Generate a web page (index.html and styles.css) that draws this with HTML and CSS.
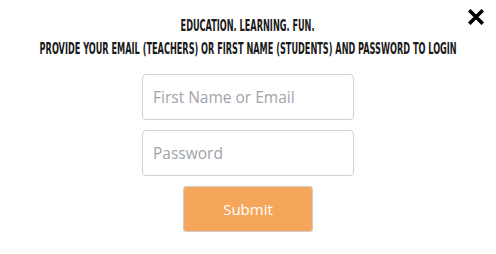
FILE: index.html
```html
<!DOCTYPE html>
<html>
<head>
<meta charset="utf-8">
<link rel="stylesheet" href="styles.css">
</head>
<body>
<div class="modal">
  <button class="close" aria-label="Close">
    <svg width="16" height="16" viewBox="0 0 16 16"><path d="M2.5 2.5 L13.5 13.5 M13.5 2.5 L2.5 13.5" stroke="#000" stroke-width="3.6" stroke-linecap="square"/></svg>
  </button>
  <div class="heading">
    <p class="line"><span class="squeeze">Education. Learning. Fun.</span></p>
    <p class="line"><span class="squeeze">Provide your email (teachers) or first name (students) and password to login</span></p>
  </div>
  <form class="form">
    <input class="field" type="text" placeholder="First Name or Email">
    <input class="field" type="password" placeholder="Password">
    <button class="submit" type="button">Submit</button>
  </form>
</div>
</body>
</html>
```
FILE: styles.css
```css
html, body {
  margin: 0;
  padding: 0;
  background: #fff;
}
.modal {
  position: relative;
  width: 496px;
  height: 254px;
  display: flex;
  flex-direction: column;
  align-items: center;
  padding-top: 18px;
  box-sizing: border-box;
  overflow: hidden;
}
.close {
  position: absolute;
  top: 9px;
  left: 468px;
  padding: 0;
  border: 0;
  background: none;
  width: 16px;
  height: 16px;
}
.close svg { display: block; }
.heading {
  display: flex;
  flex-direction: column;
  align-items: center;
  gap: 6px;
  width: 496px;
}
.line {
  margin: 0;
  width: 496px;
  height: 17px;
  display: flex;
  justify-content: center;
  white-space: nowrap;
  overflow: hidden;
}
.squeeze {
  flex: none;
  display: inline-block;
  font-family: "DejaVu Sans", sans-serif;
  font-stretch: condensed;
  font-weight: bold;
  font-size: 15px;
  line-height: 17px;
  text-transform: uppercase;
  color: #1a1a1a;
  transform: scaleX(0.606);
  transform-origin: center;
}
.form {
  margin-top: 16px;
  display: flex;
  flex-direction: column;
  align-items: center;
  gap: 10px;
}
.field {
  width: 212px;
  height: 46px;
  box-sizing: border-box;
  border: 1px solid #cfd2d6;
  border-radius: 4px;
  padding: 0 10px;
  font-family: "Open Sans", sans-serif;
  font-size: 15.5px;
  color: #333;
  outline: none;
}
.field::placeholder {
  color: #9ea3a9;
}
.submit {
  width: 130px;
  height: 46px;
  box-sizing: border-box;
  background: #f5a65b;
  border: 1px solid #cfcfcf;
  border-radius: 3px;
  color: #fff;
  font-family: "Open Sans", sans-serif;
  font-size: 15px;
}
```
